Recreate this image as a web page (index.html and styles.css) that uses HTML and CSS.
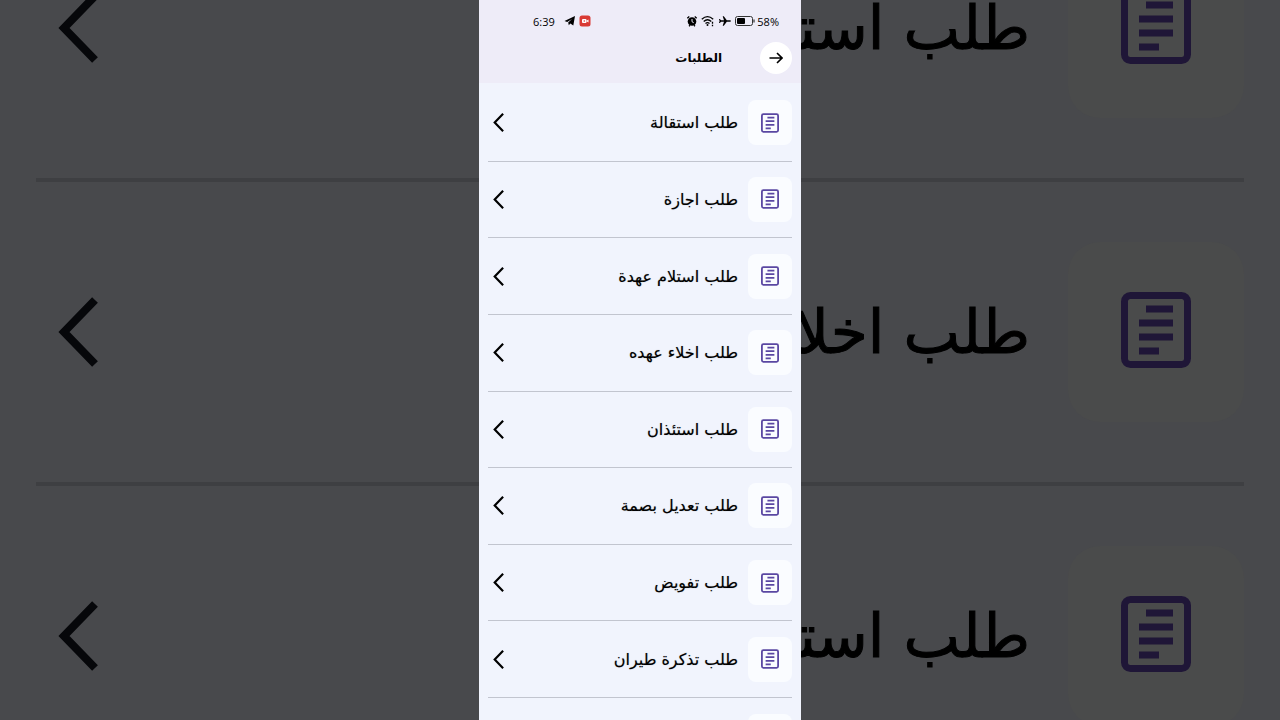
FILE: index.html
```
<!DOCTYPE html>
<html lang="ar" dir="rtl">
<head>
    <meta charset="UTF-8">
    <meta name="viewport" content="width=device-width, initial-scale=1.0">
    <title>الطلبات</title>
    <link rel="stylesheet" href="styles.css">
</head>
<body>

<svg class="sprite" aria-hidden="true">
    <symbol id="doc" viewBox="0 0 70 76">
        <rect x="3.5" y="3.5" width="63" height="69" rx="6" fill="none" stroke="currentColor" stroke-width="7"/>
        <path d="M25 17h27M18 31h34M18 45h34M18 59h20" fill="none" stroke="currentColor" stroke-width="7"/>
    </symbol>
    <symbol id="chevron" viewBox="0 0 40 70">
        <path d="M37 3L6 35l31 32" fill="none" stroke="currentColor" stroke-width="8"/>
    </symbol>
</svg>

<div class="stage">
    <!-- enlarged, dimmed copy of the list behind the phone -->
    <div class="backdrop" aria-hidden="true">
        <div class="row">
            <span class="tile"><svg class="doc"><use href="#doc"/></svg></span>
            <span class="label">طلب استلام عهدة</span>
            <svg class="chevron"><use href="#chevron"/></svg>
        </div>
        <div class="row">
            <span class="tile"><svg class="doc"><use href="#doc"/></svg></span>
            <span class="label">طلب اخلاء عهده</span>
            <svg class="chevron"><use href="#chevron"/></svg>
        </div>
        <div class="row">
            <span class="tile"><svg class="doc"><use href="#doc"/></svg></span>
            <span class="label">طلب استئذان</span>
            <svg class="chevron"><use href="#chevron"/></svg>
        </div>
    </div>

    <main class="phone">
        <header class="header">
            <div class="status" dir="ltr">
                <span class="time">6:39</span>
                <svg width="12" height="12" viewBox="0 0 12 12"><path d="M.5 6L11 1 9.300 10.600 6.300 8.600 4.800 10.200 4.200 7.400 8 4 3.200 7z"/></svg>
                <svg width="12" height="12" viewBox="0 0 12 12"><rect x=".5" y=".5" width="11" height="11" rx="2.500" fill="#d93a34"/><rect x="3" y="4" width="4.500" height="4" rx="1" fill="#fff"/><path d="M7 6l2.500-1.600v3.200z" fill="#fff"/><circle cx="5.300" cy="6" r=".8" fill="#d93a34"/></svg>
                <span class="spacer"></span>
                <svg width="12" height="12" viewBox="0 0 12 12"><circle cx="6" cy="6.500" r="4.300"/><path d="M1.300 3.300L3.300 1.500M10.700 3.300L8.700 1.500M3 11.200l1-1M9 11.200l-1-1" stroke="#000" stroke-width="1.300"/><path d="M6 4v2.700l1.700 1" fill="none" stroke="#eeecf8" stroke-width="1"/></svg>
                <svg width="14" height="12" viewBox="0 0 14 12"><path d="M.8 4.300Q6.500-1 12.200 4.300M2.700 6.400Q6.500 3 10.300 6.400M4.500 8.400Q6.500 6.800 8.500 8.400" fill="none" stroke="#000" stroke-width="1.300"/><circle cx="6.500" cy="10" r="1"/><path d="M11.500 6.800v2M11.500 9.700v1.600" fill="none" stroke="#000" stroke-width="1.300"/></svg>
                <svg width="14" height="12" viewBox="0 0 14 12"><path d="M13 6q0-.8-1.100-.8H8.800L5.800 1.200H4.700l1.300 4H3L1.900 4H1l.6 2L1 8h.9L3 6.800h3l-1.300 4h1.100l3-4h3.100q1.100 0 1.100-.8z"/></svg>
                <span class="power">
                    <svg width="20" height="10" viewBox="0 0 20 10"><rect x=".5" y=".5" width="17" height="9" rx="2" fill="none" stroke="#333"/><rect x="2" y="2" width="8" height="6" rx="1"/><path d="M19 3.500v3" stroke="#333" stroke-width="1.200"/></svg>
                    58%
                </span>
            </div>
            <div class="titlebar">
                <button class="back" type="button" aria-label="رجوع">
                    <svg width="14" height="12" viewBox="0 0 14 12"><path d="M.5 6H13M8 1l5 5-5 5" fill="none" stroke="#000" stroke-width="1.600"/></svg>
                </button>
                <h1>الطلبات</h1>
            </div>
        </header>

        <nav class="list">
            <a class="row" href="#">
                <span class="tile"><svg class="doc"><use href="#doc"/></svg></span>
                <span class="label">طلب استقالة</span>
                <svg class="chevron"><use href="#chevron"/></svg>
            </a>
            <a class="row" href="#">
                <span class="tile"><svg class="doc"><use href="#doc"/></svg></span>
                <span class="label">طلب اجازة</span>
                <svg class="chevron"><use href="#chevron"/></svg>
            </a>
            <a class="row" href="#">
                <span class="tile"><svg class="doc"><use href="#doc"/></svg></span>
                <span class="label">طلب استلام عهدة</span>
                <svg class="chevron"><use href="#chevron"/></svg>
            </a>
            <a class="row" href="#">
                <span class="tile"><svg class="doc"><use href="#doc"/></svg></span>
                <span class="label">طلب اخلاء عهده</span>
                <svg class="chevron"><use href="#chevron"/></svg>
            </a>
            <a class="row" href="#">
                <span class="tile"><svg class="doc"><use href="#doc"/></svg></span>
                <span class="label">طلب استئذان</span>
                <svg class="chevron"><use href="#chevron"/></svg>
            </a>
            <a class="row" href="#">
                <span class="tile"><svg class="doc"><use href="#doc"/></svg></span>
                <span class="label">طلب تعديل بصمة</span>
                <svg class="chevron"><use href="#chevron"/></svg>
            </a>
            <a class="row" href="#">
                <span class="tile"><svg class="doc"><use href="#doc"/></svg></span>
                <span class="label">طلب تفويض</span>
                <svg class="chevron"><use href="#chevron"/></svg>
            </a>
            <a class="row" href="#">
                <span class="tile"><svg class="doc"><use href="#doc"/></svg></span>
                <span class="label">طلب تذكرة طيران</span>
                <svg class="chevron"><use href="#chevron"/></svg>
            </a>
            <div class="next"><span class="tile"></span></div>
        </nav>
    </main>
</div>

</body>
</html>
```
FILE: styles.css
```
* {
    box-sizing: border-box;
}

body, html {
    height: 100%;
    margin: 0;
    overflow: hidden;
    font-family: "DejaVu Sans", sans-serif;
    background-color: #48494c;
    color: #000;
}

.sprite {
    position: absolute;
    width: 0;
    height: 0;
}

svg {
    display: block;
    flex: none;
}

/* backdrop and phone share one grid cell */
.stage {
    display: grid;
    grid-template: 100% / 100%;
    height: 100%;
    overflow: hidden;
}

.backdrop, .phone {
    grid-area: 1 / 1;
}

.row {
    display: flex;
    align-items: center;
    color: inherit;
    text-decoration: none;
}

.label {
    flex: 1;
    white-space: nowrap;
}

.tile {
    display: flex;
    flex: none;
    align-items: center;
    justify-content: center;
}

/* backdrop */
.backdrop {
    margin-top: -122px;
    padding: 0 36px;
}

.backdrop .row {
    height: 304px;
    gap: 38px;
    padding-left: 22px;
    border-bottom: 4px solid #3e3f42;
    font-size: 60px;
    -webkit-text-stroke: 1px #000;
}

.backdrop .tile {
    width: 176px;
    height: 180px;
    padding-bottom: 4px;
    border-radius: 32px;
    background-color: #4a4b4b;
    color: #1f1637;
}

.backdrop .doc {
    width: 70px;
    height: 76px;
}

.backdrop .chevron {
    width: 40px;
    height: 70px;
    color: #06070a;
}

/* phone */
.phone {
    display: flex;
    flex-direction: column;
    justify-self: center;
    width: 100%;
    max-width: 322px;
    overflow: hidden;
    background-color: #f1f4fd;
}

.header {
    flex: none;
    padding: 12px 9px 9px;
    background-color: #eeecf8;
}

.status {
    display: flex;
    align-items: center;
    gap: 3px;
    height: 18px;
    padding: 0 13px 0 45px;
    font-family: "Open Sans", sans-serif;
    font-size: 11px;
}

.time {
    margin-right: 6px;
}

.spacer {
    flex: 1;
}

.power {
    display: flex;
    align-items: center;
    gap: 2px;
}

.titlebar {
    display: flex;
    align-items: center;
    gap: 38px;
    margin-top: 12px;
}

.back {
    display: flex;
    align-items: center;
    justify-content: center;
    width: 32px;
    height: 32px;
    padding: 0;
    border: none;
    border-radius: 50%;
    background-color: #fff;
    cursor: pointer;
}

h1 {
    margin: 0;
    font-size: 12px;
    line-height: 20px;
}

.list {
    display: flex;
    flex: 1;
    flex-direction: column;
    padding: 2px 9px 0;
}

.list .row {
    flex: 1;
    gap: 10px;
    padding-left: 5px;
    border-bottom: 1px solid #c2c5cf;
    font-size: 16px;
    text-shadow: 0 0 1px rgba(0, 0, 0, 0.4);
}

.list .tile {
    width: 44px;
    height: 45px;
    border-radius: 8px;
    background-color: #fafcff;
    color: #5a47a2;
}

.list .doc {
    width: 18px;
    height: 20px;
}

.list .chevron {
    width: 11px;
    height: 19px;
}

/* top edge of the item after the fold */
.next {
    height: 22px;
    padding-top: 16px;
    overflow: hidden;
}
```
